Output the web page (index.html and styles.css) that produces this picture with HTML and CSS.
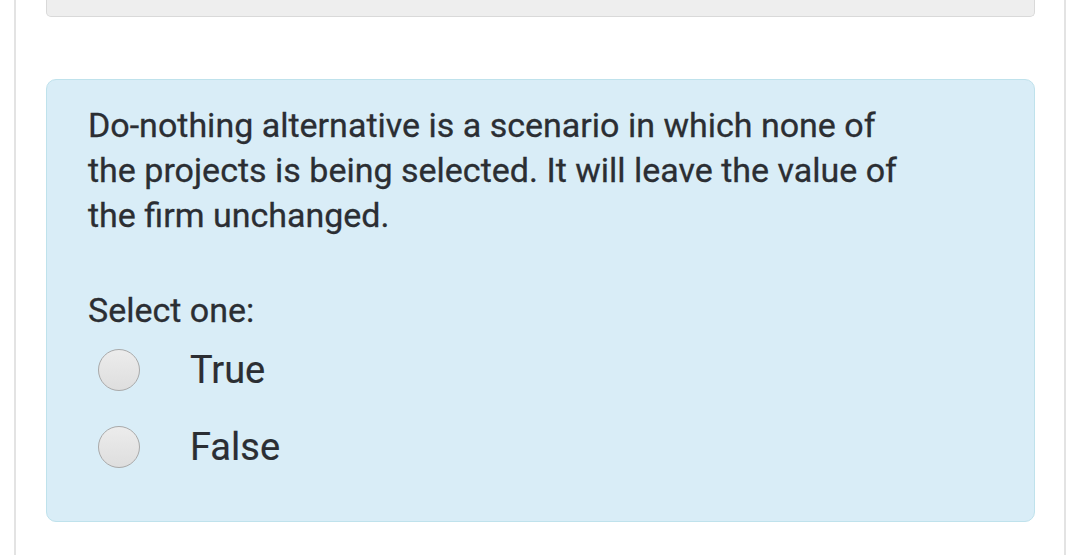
FILE: index.html
```html
<!DOCTYPE html>
<html>
<head>
<meta charset="utf-8">
<link rel="stylesheet" href="styles.css">
</head>
<body>
<div class="page">
  <div class="prev-box"></div>
  <div class="question">
    <p class="qtext">Do-nothing alternative is a scenario in which none of the projects is being selected. It will leave the value of the firm unchanged.</p>
    <div class="prompt">Select one:</div>
    <div class="answers">
      <label class="option"><span class="radio"></span><span class="label">True</span></label>
      <label class="option"><span class="radio"></span><span class="label">False</span></label>
    </div>
  </div>
</div>
</body>
</html>
```
FILE: styles.css
```css
html, body {
  margin: 0;
  padding: 0;
  background: #fff;
}
body {
  font-family: Roboto, "Liberation Sans", sans-serif;
  color: #2b2e33;
  overflow: hidden;
  height: 555px;
}
.page {
  margin-left: 14px;
  width: 989px;
  height: 555px;
  border-left: 2px solid #e3e3e3;
  border-right: 2px solid #e3e3e3;
  padding: 0 29px 0 30px;
  box-sizing: content-box;
}
.prev-box {
  height: 17px;
  background: #eeeeee;
  border: 1px solid #d9d9d9;
  border-top: none;
  border-radius: 0 0 5px 5px;
  box-sizing: border-box;
}
.question {
  margin-top: 62px;
  height: 443px;
  box-sizing: border-box;
  background: #d9edf7;
  border: 1px solid #bfe2ec;
  border-radius: 10px;
  padding: 23px 41px 0 41px;
}
.qtext {
  margin: 0;
  font-size: 34px;
  line-height: 45px;
  width: 835px;
  -webkit-text-stroke: 0.3px #2b2e33;
}
.prompt {
  margin-top: 50px;
  font-size: 34px;
  line-height: 45px;
  -webkit-text-stroke: 0.3px #2b2e33;
}
.answers {
  margin-top: 16px;
}
.option {
  display: flex;
  align-items: center;
  height: 42px;
  margin-bottom: 35px;
}
.radio {
  width: 40px;
  height: 40px;
  border-radius: 50%;
  border: 1px solid #a9a9a9;
  background: linear-gradient(#ececec, #dedede);
  margin-left: 10px;
  flex: none;
}
.label {
  margin-left: 50px;
  font-size: 38px;
  line-height: 42px;
  -webkit-text-stroke: 0.2px #2b2e33;
}
```
